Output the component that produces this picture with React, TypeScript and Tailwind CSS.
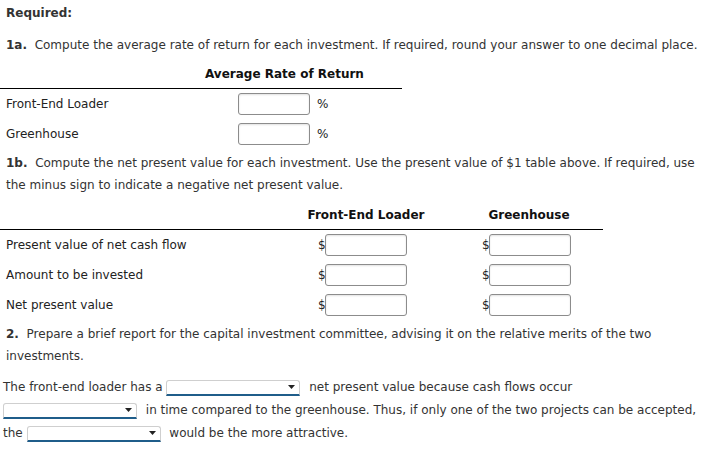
function Box({ w = "w-[72px]" }: { w?: string }) {
  return (
    <div
      className={`${w} h-[22px] rounded-[3px] border border-[#8c8c8c] bg-white shadow-[inset_0_1px_2px_rgba(0,0,0,0.12)]`}
    />
  );
}

function Money() {
  return (
    <div className="flex items-center">
      <span className="w-[7px] text-[12px] text-[#222]">$</span>
      <Box w="w-[82px]" />
    </div>
  );
}

function Dropdown() {
  return (
    <span className="mr-[5px] inline-flex h-[16px] w-[134px] items-center justify-end rounded-t-[3px] border border-b-2 border-[#cfcfcf] border-b-[#1f5d8a] bg-white pr-[4px] align-middle">
      <svg width="7" height="4" viewBox="0 0 7 4">
        <path d="M0 0h7L3.5 4z" fill="#222" />
      </svg>
    </span>
  );
}

export default function App() {
  return (
    <div
      className="w-[712px] h-[459px] bg-white text-[12px] text-[#333]"
      style={{ fontFamily: '"DejaVu Sans", Verdana, sans-serif' }}
    >
      <div className="px-[6px] pt-[4px] font-bold leading-[18px]">Required:</div>

      <p className="px-[6px] pt-[14px] leading-[18px]">
        <b className="text-[#333]">1a.</b>&nbsp; Compute the average rate of return for each investment. If
        required, round your answer to one decimal place.
      </p>

      {/* 1a table */}
      <div className="mt-[11px] w-[402px]">
        <div className="pl-[205px] font-bold leading-[18px] text-[#111]">Average Rate of Return</div>
        <div className="mt-[5px] border-t border-black" />
        <div className="flex h-[30px] items-center">
          <span className="w-[238px] pl-[6px] text-[#222]">Front-End Loader</span>
          <Box />
          <span className="ml-[7px] text-[#222]">%</span>
        </div>
        <div className="flex h-[30px] items-center">
          <span className="w-[238px] pl-[6px] text-[#222]">Greenhouse</span>
          <Box />
          <span className="ml-[7px] text-[#222]">%</span>
        </div>
      </div>

      <p className="px-[6px] pt-[3px] leading-[22px]">
        <b>1b.</b>&nbsp; Compute the net present value for each investment. Use the present value of $1 table
        above. If required, use the minus sign to indicate a negative net present value.
      </p>

      {/* 1b table */}
      <div className="mt-[10px] w-[603px]">
        <div className="flex font-bold leading-[18px] text-[#111]">
          <span className="w-[286px] shrink-0" />
          <span className="w-[160px] shrink-0 text-center">Front-End Loader</span>
          <span className="w-[166px] shrink-0 text-center">Greenhouse</span>
        </div>
        <div className="mt-[5px] border-t border-black" />
        {["Present value of net cash flow", "Amount to be invested", "Net present value"].map((label) => (
          <div key={label} className="flex h-[30px] items-center">
            <span className="w-[318px] pl-[6px] text-[#222]">{label}</span>
            <div className="w-[164px]">
              <Money />
            </div>
            <Money />
          </div>
        ))}
      </div>

      <p className="px-[6px] pt-[3px] leading-[22px]">
        <b>2.</b>&nbsp; Prepare a brief report for the capital investment committee, advising it on the relative
        merits of the two investments.
      </p>

      <div className="mt-[9px] pl-[3px] leading-[23px]">
        <div>
          The front-end loader has a <Dropdown /> net present value because cash flows occur
        </div>
        <div className="whitespace-nowrap">
          <Dropdown /> in time compared to the greenhouse. Thus, if only one of the two projects can be accepted,
        </div>
        <div>
          the <Dropdown /> would be the more attractive.
        </div>
      </div>
    </div>
  );
}
